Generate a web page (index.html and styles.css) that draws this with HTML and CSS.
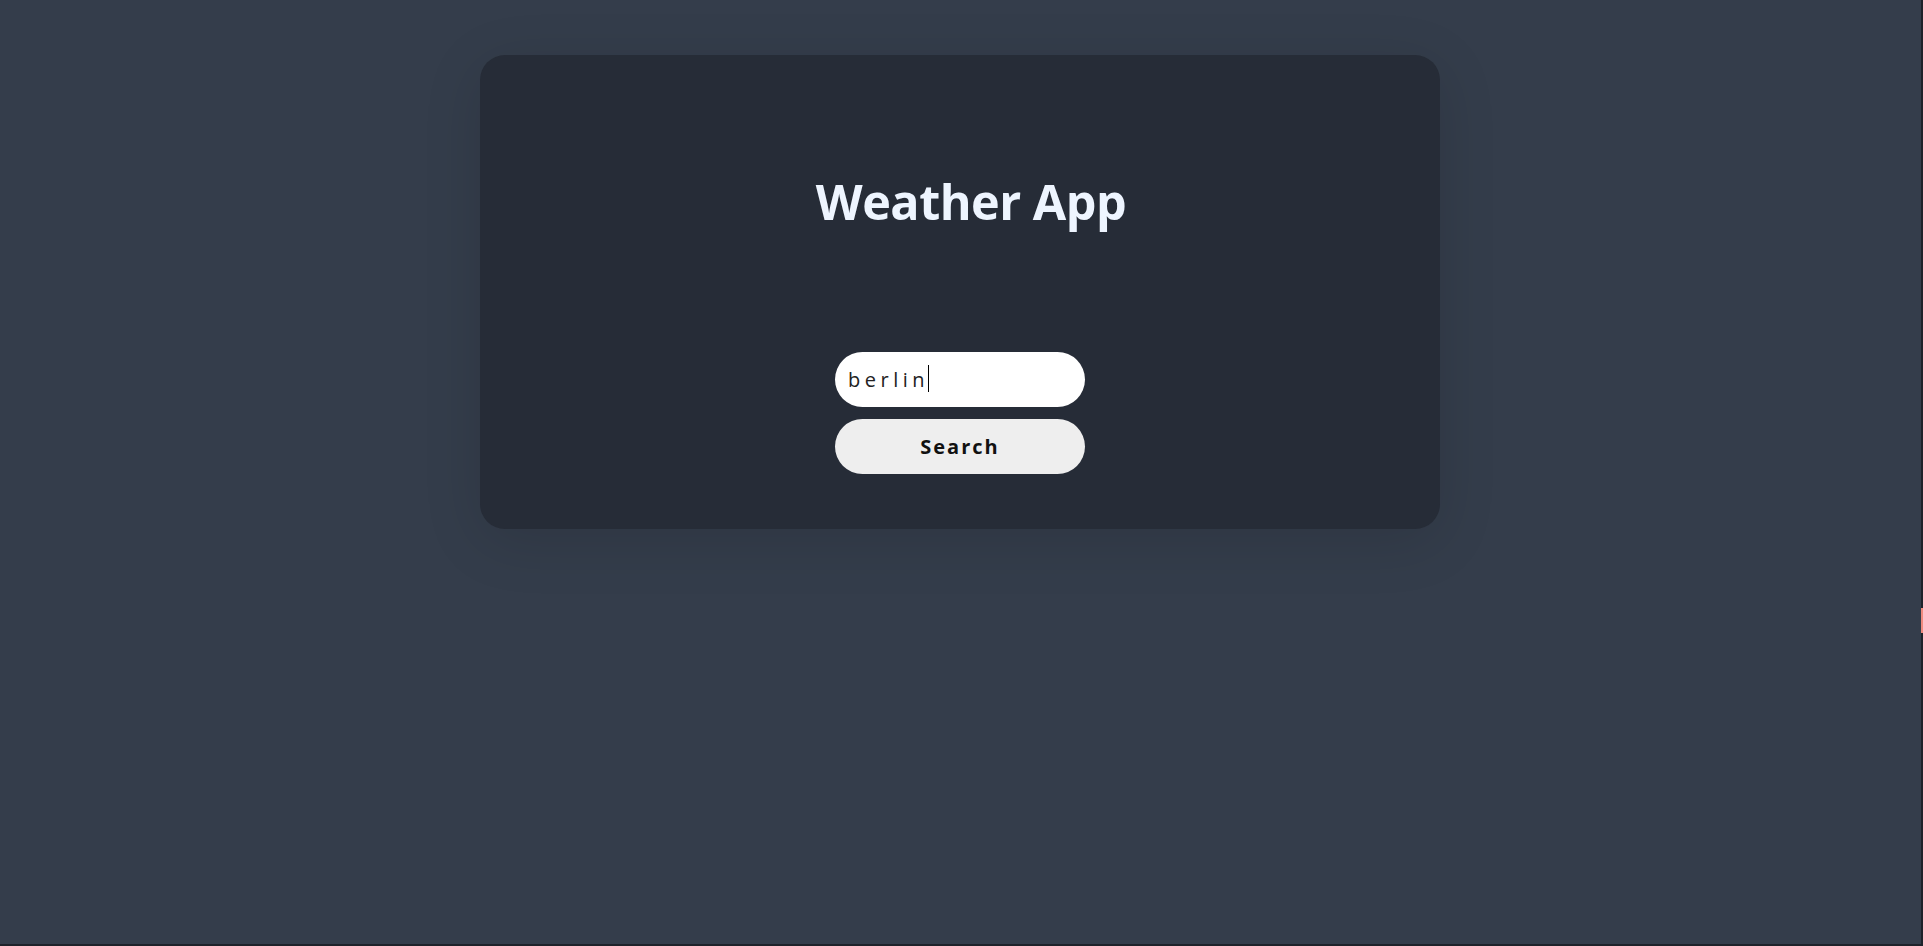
FILE: index.html
```html
<!DOCTYPE html>
<html lang="en">
<head>
<meta charset="utf-8">
<title>Weather App</title>
<link rel="stylesheet" href="styles.css">
</head>
<body>
<main class="app">
  <section class="card">
    <h1 class="title">Weather App</h1>
    <form class="search" onsubmit="return false">
      <div class="input-wrap">
        <input class="search-input" type="text" value="berlin" autofocus>
        <span class="caret"></span>
      </div>
      <button class="search-button" type="submit">Search</button>
    </form>
  </section>
</main>
<div class="frame-edge"><span class="frame-mark"></span></div>
<div class="frame-bottom"></div>
</body>
</html>
```
FILE: styles.css
```css
* {
  box-sizing: border-box;
}

html, body {
  margin: 0;
  height: 100%;
}

body {
  background: #343d4b;
  font-family: "Open Sans", "Noto Sans", sans-serif;
  overflow: hidden;
}

.app {
  display: flex;
  justify-content: center;
  padding-top: 55px;
  padding-right: 3px;
}

.card {
  width: 960px;
  height: 474px;
  background: #262c37;
  border-radius: 25px;
  box-shadow: 0 12px 60px rgba(0, 0, 0, 0.12);
  display: flex;
  flex-direction: column;
  align-items: center;
  padding-top: 114px;
}

.title {
  margin: 0 0 0 22px;
  color: #eef5ff;
  font-size: 48.5px;
  line-height: 64px;
  font-weight: 700;
  letter-spacing: -0.5px;
}

.search {
  margin-top: 119px;
  display: flex;
  flex-direction: column;
  gap: 12px;
  width: 250px;
}

.input-wrap {
  position: relative;
}

.search-input,
.search-button {
  width: 100%;
  height: 55px;
  border: none;
  border-radius: 28px;
  font-family: inherit;
  font-size: 20px;
  outline: none;
}

.search-input {
  display: block;
  background: #ffffff;
  color: #222;
  padding: 0 13px;
  letter-spacing: 4.5px;
  caret-color: transparent;
}

/* text cursor after the typed value */
.caret {
  position: absolute;
  left: 93px;
  top: 13px;
  width: 1px;
  height: 27px;
  background: #000;
}

.search-button {
  background: #eeeeee;
  color: #111;
  font-weight: 700;
  letter-spacing: 2px;
  cursor: pointer;
}

/* thin window frame along the right and bottom edges */
.frame-edge {
  position: fixed;
  top: 0;
  right: 0;
  width: 2px;
  height: 100%;
  background: #1e222a;
}

.frame-mark {
  position: absolute;
  top: 608px;
  left: 0;
  width: 2px;
  height: 25px;
  background: #f08a7e;
}

.frame-bottom {
  position: fixed;
  left: 0;
  bottom: 0;
  width: 100%;
  height: 2px;
  background: #1e222a;
}
```
